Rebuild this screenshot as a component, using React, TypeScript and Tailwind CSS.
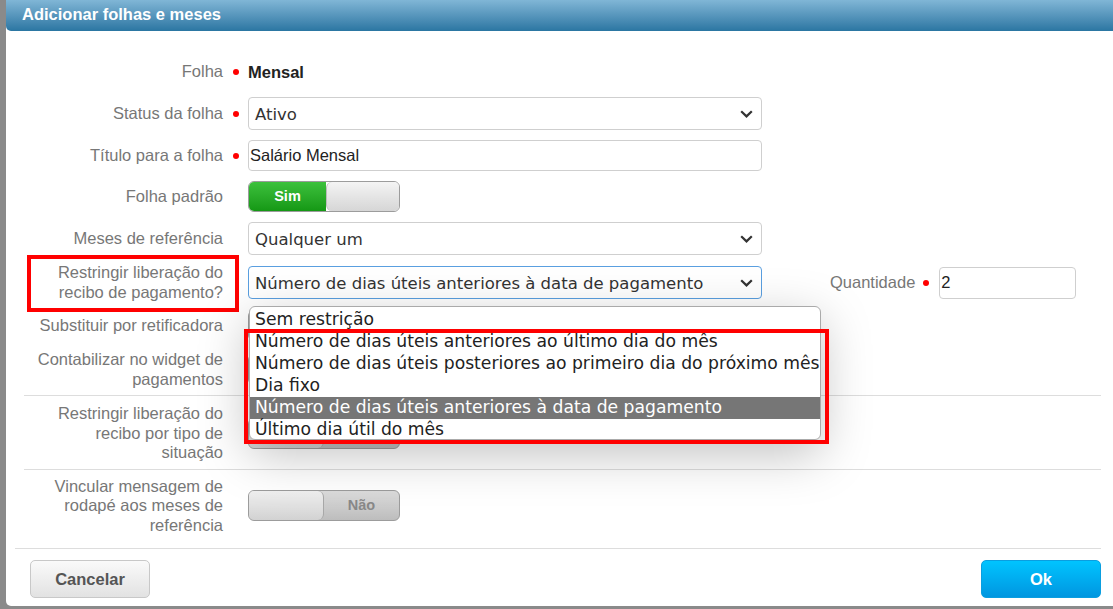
import type React from "react"

const labelCls = "text-right text-[16.5px] leading-[19.5px] text-[#777]"

function Dot() {
  return <span className="block w-[6px] h-[6px] rounded-full bg-[#f00]" />
}

function Chevron() {
  return (
    <svg width="13" height="8" viewBox="0 0 13 8" className="shrink-0">
      <path d="M1.2 1.2 L6.5 6.4 L11.8 1.2" fill="none" stroke="#333" strokeWidth="2.2" />
    </svg>
  )
}

interface RowProps {
  label: React.ReactNode
  required?: boolean
  children?: React.ReactNode
  className?: string
}

function Row({ label, required, children, className = "" }: RowProps) {
  return (
    <div className={`grid grid-cols-[199px_25px_1fr] items-center ${className}`}>
      <div className={labelCls}>{label}</div>
      <div className="flex justify-center">{required && <Dot />}</div>
      <div className="flex items-center">{children}</div>
    </div>
  )
}

function Select({ value, focused }: { value: string; focused?: boolean }) {
  return (
    <div
      className={`w-[514px] h-[33px] flex items-center justify-between pl-[6px] pr-[8px] rounded-[4px] border bg-white ${
        focused ? "border-[#5a9fe0]" : "border-[#cfcfcf]"
      }`}
    >
      <span className="pt-[3px] font-['DejaVu_Sans',sans-serif] text-[16.5px] text-[#333] whitespace-nowrap">{value}</span>
      <Chevron />
    </div>
  )
}

function ToggleOn() {
  return (
    <div className="flex w-[152px] h-[31px] rounded-[6px] border border-[#9c9c9c] overflow-hidden">
      <div className="w-[77px] flex items-center justify-center bg-gradient-to-b from-[#3cc13c] to-[#149814] text-white font-bold text-[14.5px]">
        Sim
      </div>
      <div className="flex-1 rounded-l-[6px] border-l border-[#bbb] bg-gradient-to-b from-[#f4f4f4] to-[#d6d6d6]" />
    </div>
  )
}

function ToggleOff() {
  return (
    <div className="flex w-[152px] h-[31px] rounded-[6px] border border-[#9c9c9c] overflow-hidden bg-gradient-to-b from-[#dcdcdc] to-[#bdbdbd]">
      <div className="w-[75px] rounded-r-[6px] border-r border-[#a8a8a8] bg-gradient-to-b from-[#f0f0f0] to-[#d2d2d2]" />
      <div className="flex-1 flex items-center justify-center text-[#888] font-bold text-[14.5px]">Não</div>
    </div>
  )
}

const options = [
  "Sem restrição",
  "Número de dias úteis anteriores ao último dia do mês",
  "Número de dias úteis posteriores ao primeiro dia do próximo mês",
  "Dia fixo",
  "Número de dias úteis anteriores à data de pagamento",
  "Último dia útil do mês",
]

export default function App() {
  return (
    <div className="w-full h-[609px] overflow-hidden bg-[#8a8a8a] pl-[6px] font-['Liberation_Sans',Arial,sans-serif]">
      <div className="w-[1116px] h-[606px] bg-white rounded-bl-[5px] flex flex-col">
        {/* Header */}
        <div className="h-[31px] shrink-0 rounded-b-[5px] bg-gradient-to-b from-[#80b6d6] to-[#2a76a2] flex items-center pl-[16px]">
          <h1 className="text-white font-bold text-[16.5px] leading-none -mt-[3px]">Adicionar folhas e meses</h1>
        </div>

        {/* Body */}
        <div className="pl-[18px] pt-[25px]">
          <Row label="Folha" required className="h-[32px]">
            <span className="font-bold text-[16.5px] text-[#222]">Mensal</span>
          </Row>
          <Row label="Status da folha" required className="mt-[9px]">
            <Select value="Ativo" />
          </Row>
          <Row label="Título para a folha" required className="mt-[10px]">
            <div className="w-[514px] h-[31px] rounded-[4px] border border-[#cfcfcf] pl-[1px] flex items-center text-[16.5px] text-[#222]">
              Salário Mensal
            </div>
          </Row>
          <Row label="Folha padrão" className="mt-[10px]">
            <ToggleOn />
          </Row>
          <Row label="Meses de referência" className="mt-[10px]">
            <Select value="Qualquer um" />
          </Row>

          <div className="relative mt-[8px]">
            <Row label={<>Restringir liberação do<br />recibo de pagamento?</>}>
              <div className="relative">
                <Select value="Número de dias úteis anteriores à data de pagamento" focused />
                {/* open option list */}
                <div className="absolute left-[1px] top-[40px] z-10 w-[572px] h-[134px] rounded-[6px] border border-[#aaa] bg-white overflow-hidden shadow-[0_14px_50px_rgba(0,0,0,0.25)] pt-[2px]">
                  {options.map((o, i) => (
                    <div
                      key={o}
                      className={`h-[22px] flex items-center pl-[5px] font-['DejaVu_Sans',sans-serif] text-[17.2px] whitespace-nowrap ${
                        i === 4 ? "bg-[#767676] text-white" : "text-[#222]"
                      }`}
                    >
                      {o}
                    </div>
                  ))}
                </div>
                <div className="absolute left-[-4px] top-[63px] z-20 w-[585px] h-[115px] border-[4px] border-[#f00] pointer-events-none" />
              </div>
              <span className="ml-[68px] text-[16.5px] text-[#777]">Quantidade</span>
              <span className="ml-[8px]">
                <Dot />
              </span>
              <div className="ml-[10px] w-[137px] h-[32px] rounded-[4px] border border-[#cfcfcf] pl-[1px] flex items-center text-[16.5px] text-[#222]">
                2
              </div>
            </Row>
            <div className="absolute left-[3px] top-[-8px] w-[212px] h-[57px] border-[4px] border-[#f00] pointer-events-none" />
          </div>

          <Row label="Substituir por retificadora" className="mt-[8px]">
            <ToggleOn />
          </Row>
          <Row label={<>Contabilizar no widget de<br />pagamentos</>} className="mt-[9px]">
            <ToggleOn />
          </Row>

          <div className="w-[1077px] h-[1px] bg-[#ddd] mt-[6px]" />
          <Row label={<>Restringir liberação do<br />recibo por tipo de<br />situação</>} className="mt-[8px]">
            <ToggleOff />
          </Row>

          <div className="w-[1077px] h-[1px] bg-[#ddd] mt-[6px]" />
          <Row label={<>Vincular mensagem de<br />rodapé aos meses de<br />referência</>} className="mt-[7px]">
            <ToggleOff />
          </Row>
        </div>

        {/* Footer */}
        <div className="mt-auto ml-[9px] w-[1086px] border-t border-[#ddd] pt-[11px] pb-[8px] pl-[15px] flex justify-between">
          <button className="w-[120px] h-[38px] rounded-[5px] border border-[#c8c8c8] bg-gradient-to-b from-[#fafafa] to-[#e2e2e2] text-[#555] font-bold text-[16.5px]">
            Cancelar
          </button>
          <button className="w-[120px] h-[38px] rounded-[5px] border border-[#0a9ee0] bg-gradient-to-b from-[#00c4ff] to-[#0096e0] text-white font-bold text-[16.5px]">
            Ok
          </button>
        </div>
      </div>
    </div>
  )
}
